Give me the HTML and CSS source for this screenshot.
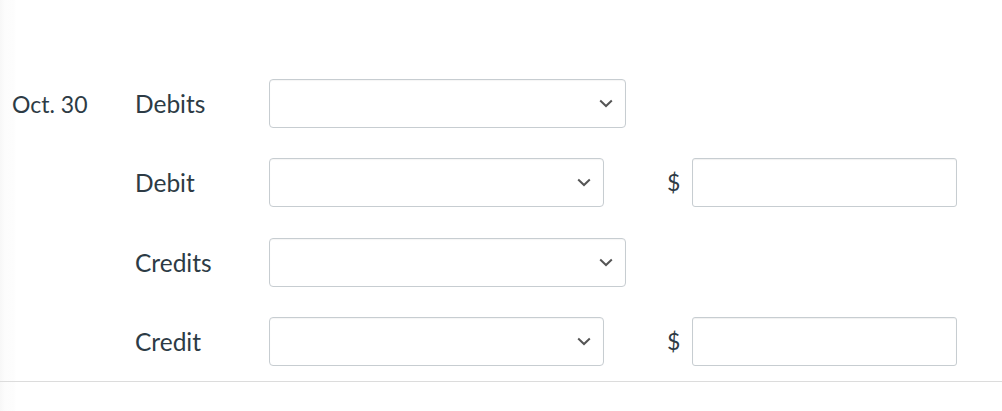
FILE: index.html
```html
<!DOCTYPE html>
<html lang="en">
<head>
<meta charset="utf-8">
<title>Journal entry</title>
<link rel="stylesheet" href="styles.css">
</head>
<body>
<div class="page">
  <div class="entry">
    <div class="date">Oct. 30</div>
    <div class="label">Debits</div>
    <div class="fields">
      <div class="sel long"><select aria-label="Debits"><option></option></select><svg class="chev" viewBox="0 0 14 9" width="14" height="9"><path d="M1.2 1.5 L7 7 L12.8 1.5" fill="none" stroke="#555" stroke-width="2"/></svg></div>
    </div>

    <div class="date"></div>
    <div class="label">Debit</div>
    <div class="fields">
      <div class="sel short"><select aria-label="Debit"><option></option></select><svg class="chev" viewBox="0 0 14 9" width="14" height="9"><path d="M1.2 1.5 L7 7 L12.8 1.5" fill="none" stroke="#555" stroke-width="2"/></svg></div>
      <span class="dollar">$</span>
      <input class="amount" type="text" aria-label="Debit amount">
    </div>

    <div class="date"></div>
    <div class="label">Credits</div>
    <div class="fields">
      <div class="sel long"><select aria-label="Credits"><option></option></select><svg class="chev" viewBox="0 0 14 9" width="14" height="9"><path d="M1.2 1.5 L7 7 L12.8 1.5" fill="none" stroke="#555" stroke-width="2"/></svg></div>
    </div>

    <div class="date"></div>
    <div class="label">Credit</div>
    <div class="fields">
      <div class="sel short"><select aria-label="Credit"><option></option></select><svg class="chev" viewBox="0 0 14 9" width="14" height="9"><path d="M1.2 1.5 L7 7 L12.8 1.5" fill="none" stroke="#555" stroke-width="2"/></svg></div>
      <span class="dollar">$</span>
      <input class="amount" type="text" aria-label="Credit amount">
    </div>
  </div>
  <div class="rule"></div>
</div>
</body>
</html>
```

FILE: styles.css
```css
html, body {
  margin: 0;
  padding: 0;
  background: #fff;
}
body {
  font-family: Lato, "Liberation Sans", sans-serif;
  color: #2d3b45;
  width: 1002px;
  height: 411px;
  overflow: hidden;
  background: linear-gradient(to right, #f7f7f7 0, #fcfcfc 5px, #fdfdfd 14px, #fff 16px);
}
.page {
  padding-top: 79px;
}
.entry {
  display: grid;
  grid-template-columns: 124px 132px 1fr;
  row-gap: 30.4px;
  padding-left: 12px;
  align-items: center;
}
.date, .label {
  font-size: 23px;
  line-height: 50px;
  height: 49px;
}
.label {
  font-size: 24.5px;
  margin-left: -1px;
}
.fields {
  display: flex;
  align-items: center;
  margin-left: 1px;
}
.sel {
  position: relative;
  height: 49px;
}
.sel.long { width: 357px; }
.sel.short { width: 335px; }
.sel select {
  appearance: none;
  -webkit-appearance: none;
  box-sizing: border-box;
  width: 100%;
  height: 100%;
  margin: 0;
  border: 1px solid #c7cdd1;
  border-radius: 4px;
  background: #fff;
  box-shadow: inset 0 1px 1px rgba(0,0,0,0.04);
  font: inherit;
}
.chev {
  position: absolute;
  right: 13px;
  top: 20px;
  pointer-events: none;
}
.dollar {
  font-size: 23px;
  margin-left: 63px;
  width: 14px;
  line-height: 49px;
}
.amount {
  box-sizing: border-box;
  margin: 0 0 0 11px;
  width: 265px;
  height: 49px;
  border: 1px solid #c7cdd1;
  border-radius: 3px;
  background: #fff;
  box-shadow: inset 0 1px 1px rgba(0,0,0,0.06);
  font: inherit;
}
.rule {
  margin-top: 15px;
  height: 1px;
  background: #dcdcdc;
}
```
